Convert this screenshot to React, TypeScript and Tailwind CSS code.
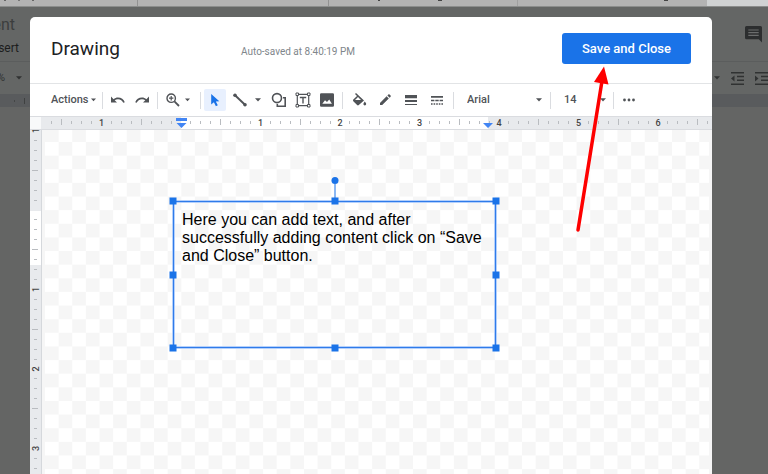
import type { ReactNode } from 'react';

const INCH = 79.5;

/* Small drop-down triangle */
const Caret = ({ className = 'w-1.5' }: { className?: string }) => (
  <svg viewBox="0 0 6 4" className={`h-1 shrink-0 ${className}`} fill="currentColor" aria-hidden="true">
    <path d="M0 0.3h6L3 3.5z" />
  </svg>
);

const Separator = () => <div className="mx-[3px] h-[17px] w-px shrink-0 bg-[#dadce0]" />;

interface ToolProps {
  label: string;
  className?: string;
  children: ReactNode;
}

const Tool = ({ label, className = 'w-6 justify-center', children }: ToolProps) => (
  <button type="button" aria-label={label} className={`flex h-[22px] shrink-0 items-center ${className}`}>
    {children}
  </button>
);

const Icon = ({ children }: { children: ReactNode }) => (
  <svg viewBox="0 0 16 16" className="h-4 w-4 shrink-0" fill="currentColor" aria-hidden="true">
    {children}
  </svg>
);

interface PickerProps {
  label: string;
  options: string[];
  className: string;
  caretClass: string;
}

const Picker = ({ label, options, className, caretClass }: PickerProps) => (
  <div className={`relative flex shrink-0 items-center ${className}`}>
    <select aria-label={label} className="h-[22px] w-full appearance-none bg-transparent pl-[10px] outline-none">
      {options.map((o) => (
        <option key={o}>{o}</option>
      ))}
    </select>
    <Caret className={`pointer-events-none absolute w-1.5 ${caretClass}`} />
  </div>
);

const Toolbar = () => (
  <div className="flex h-8 shrink-0 items-center overflow-hidden pl-[21px] text-[11px] font-medium text-[#505357]">
    <button type="button" className="flex w-12 shrink-0 items-center gap-0.5">
      Actions
      <Caret className="w-[5px]" />
    </button>
    <Separator />
    <Tool label="Undo">
      <Icon>
        <path d="M1 4.6v6h6L4.700 8.300c.9-.7 2-1.100 3.300-1.100 2.400 0 4.500 1.500 5.300 3.600l1.500-.5C13.800 7.500 11.200 5.600 8 5.600c-1.700 0-3.200.6-4.400 1.600z" />
      </Icon>
    </Tool>
    <Tool label="Redo">
      <Icon>
        <path d="M15 4.600v6H9l2.300-2.300C10.400 7.600 9.300 7.200 8 7.200c-2.400 0-4.500 1.500-5.300 3.600l-1.500-.5C2.200 7.500 4.800 5.600 8 5.600c1.700 0 3.200.6 4.400 1.600z" />
      </Icon>
    </Tool>
    <Separator />
    <Tool label="Zoom" className="w-9 gap-1 pl-1">
      <Icon>
        <g fill="none" stroke="currentColor" strokeWidth="1.4">
          <circle cx="6.2" cy="6.2" r="4.2" />
          <path d="M9.4 9.4l4.6 4.6" strokeWidth="1.8" />
          <path d="M4 6.200h4.400M6.200 4v4.400" strokeWidth="1.2" />
        </g>
      </Icon>
      <Caret className="w-[5px]" />
    </Tool>
    <Separator />
    <Tool label="Select" className="w-[22px] justify-center rounded-[2px] bg-[#e8f0fe] text-[#1a73e8]">
      <Icon>
        <path d="M4.200 2v10.600l2.700-2.300 2 4 1.900-1-2-3.800 3.500-.2z" />
      </Icon>
    </Tool>
    <Tool label="Line" className="w-[41px] gap-[7px] pl-1.5">
      <Icon>
        <path d="M3 3.200l10 9.600" stroke="currentColor" strokeWidth="1.9" />
        <circle cx="3" cy="3.200" r="1.8" />
        <circle cx="13" cy="12.800" r="1.8" />
      </Icon>
      <Caret />
    </Tool>
    <Tool label="Shape">
      <Icon>
        <g fill="none" stroke="currentColor" strokeWidth="1.6">
          <circle cx="6" cy="6.100" r="4.500" />
          <path d="M12 5.800h2.200v8.400H6.300V12" />
        </g>
      </Icon>
    </Tool>
    <Tool label="Text box">
      <Icon>
        <path d="M2.300 2.300h11.400v11.400H2.300z" fill="none" stroke="currentColor" strokeWidth="1.2" />
        <path d="M4.800 4.800h6.400v1.500H8.700v5.200H7.300V6.300H4.800z" />
        <g fill="#fff" stroke="currentColor" strokeWidth="1">
          <path d="M1 1h2.500v2.500H1zM12.500 1H15v2.500h-2.500zM1 12.500h2.500V15H1zM12.500 12.500H15V15h-2.500z" />
        </g>
      </Icon>
    </Tool>
    <Tool label="Image">
      <Icon>
        <path
          d="M2.300 1.200h11.400a1.300 1.300 0 0 1 1.300 1.300v11a1.300 1.300 0 0 1-1.300 1.300H2.300A1.300 1.300 0 0 1 1 13.500v-11a1.300 1.300 0 0 1 1.300-1.300zM3.300 11.800h9.600L10.200 7.500 8 10 6 8.200z"
          fillRule="evenodd"
        />
      </Icon>
    </Tool>
    <Separator />
    <Tool label="Fill color" className="w-[26px] justify-center">
      <Icon>
        <path d="M5 1l8 7.500-5.200 4.600c-.5.500-1.200.5-1.700 0L2.300 9.200c-.5-.5-.5-1.100 0-1.600L6 4 4 2zM7 5L4 8h6z" fillRule="evenodd" />
        <path d="M13.800 9.500s1.400 1.600 1.400 2.500a1.400 1.400 0 0 1-2.800 0c0-.9 1.400-2.500 1.400-2.500z" />
      </Icon>
    </Tool>
    <Tool label="Line color" className="w-[26px] justify-center">
      <Icon>
        <path d="M3 10.900l6.600-6.600 2.200 2.200L5.200 13.100H3zM10.400 3.500l1-1c.3-.3.800-.3 1.100 0l1.100 1.100c.3.300.3.800 0 1.100l-1 1z" />
      </Icon>
    </Tool>
    <Tool label="Line weight" className="w-[26px] justify-center">
      <Icon>
        <path d="M2 3h12v3.200H2zM2 8h12v2H2zM2 12h12v1.100H2z" />
      </Icon>
    </Tool>
    <Tool label="Line dash" className="w-[26px] justify-center">
      <Icon>
        <path d="M2 4h12v1.700H2zM2 7.700h3.400v1.500H2zM6.300 7.700h3.400v1.500H6.300zM10.600 7.700H14v1.500h-3.400zM2 11.200h1.600v1.500H2zM4.600 11.200h1.600v1.500H4.600zM7.200 11.200h1.600v1.500H7.200zM9.800 11.200h1.600v1.500H9.800zM12.400 11.200H14v1.500h-1.600z" />
      </Icon>
    </Tool>
    <Separator />
    <Picker label="Font" options={['Arial']} className="w-[90px]" caretClass="right-[5px]" />
    <Separator />
    <Picker label="Font size" options={['14']} className="w-14" caretClass="right-1" />
    <Separator />
    <Tool label="More">
      <Icon>
        <circle cx="3.500" cy="8" r="1.400" />
        <circle cx="8" cy="8" r="1.400" />
        <circle cx="12.500" cy="8" r="1.400" />
      </Icon>
    </Tool>
  </div>
);

/* Ticks sit at every eighth of an inch, with a longer one at the half */
const eighths = (from: number, length: number) =>
  Array.from({ length: Math.max(0, Math.floor((length * 8) / INCH)) - from }, (_, i) => i + from);

const HorizontalRuler = () => (
  <svg className="h-3 min-w-0 flex-1 bg-[#e8eaed]" aria-hidden="true">
    <rect x="140" y="0" width="307" height="12" fill="#fff" />
    {eighths(-13, window.innerWidth - 230).map((i) => {
      const x = 140 + (i * INCH) / 8;
      if (i === 0) return null;
      if (i % 8 === 0) {
        return (
          <text key={i} x={x} y="9" textAnchor="middle" fontSize="9" fontWeight="500" fill="#444">
            {Math.abs(i / 8)}
          </text>
        );
      }
      const half = i % 4 === 0;
      return <rect key={i} x={Math.round(x - 0.5)} y={half ? 2 : 4} width="1" height={half ? 6 : 3} fill="#b9bcc0" />;
    })}
    <path d="M135 1h11v3h-11zM135.500 6h10l-5 5zM442 6h10l-5 5z" fill="#4285f4" />
  </svg>
);

const VerticalRuler = () => (
  <svg className="h-full w-[11px] shrink-0 bg-[#e8eaed]" aria-hidden="true">
    <rect x="0" y="81" width="11" height="54" fill="#fff" />
    {eighths(-8, window.innerHeight - 200).map((i) => {
      const y = 80 + (i * INCH) / 8;
      if (i === 0) return null;
      if (i % 8 === 0) {
        return (
          <text
            key={i}
            transform={`translate(9 ${y}) rotate(-90)`}
            textAnchor="middle"
            fontSize="9"
            fontWeight="500"
            fill="#444"
          >
            {Math.abs(i / 8)}
          </text>
        );
      }
      const half = i % 4 === 0;
      return <rect key={i} x={half ? 2 : 4} y={Math.round(y - 0.5)} width={half ? 6 : 3} height="1" fill="#b9bcc0" />;
    })}
  </svg>
);

const Checkerboard = () => (
  <svg className="absolute inset-0 h-full w-full" aria-hidden="true">
    <defs>
      <pattern id="checker" x="3" y="12" width="27.26" height="27.26" patternUnits="userSpaceOnUse">
        <path d="M0 0h13.63v13.63H0zM13.63 13.63h13.63v13.63H13.63z" fill="#fff" />
      </pattern>
    </defs>
    <rect width="100%" height="100%" fill="#f6f6f6" />
    <rect x="3" width="664" height="100%" fill="url(#checker)" />
  </svg>
);

const HANDLES = [
  'left-0 top-0',
  'left-1/2 top-0',
  'left-full top-0',
  'left-0 top-1/2',
  'left-full top-1/2',
  'left-0 top-full',
  'left-1/2 top-full',
  'left-full top-full',
];

const TextBox = () => (
  <div className="absolute left-[131px] top-[71px] h-[147px] w-[323px]">
    <div className="absolute inset-0 border border-[#2f7bea] shadow-[0_0_0_1px_#b4d0fb,inset_0_0_0_1px_#b4d0fb]" />
    {/* Rotation handle */}
    <div className="absolute bottom-full left-1/2 flex -translate-x-1/2 flex-col items-center">
      <div className="h-[7px] w-[7px] rounded-full bg-[#1a73e8]" />
      <div className="h-[17px] w-px bg-[#1a73e8]" />
    </div>
    <p className="relative pl-[9px] pr-2 pt-[10px] font-['Liberation_Sans',Arial,sans-serif] text-[16px] leading-[18px] text-black">
      Here you can add text, and after successfully adding content click on “Save and Close” button.
    </p>
    {HANDLES.map((pos) => (
      <div key={pos} className={`absolute h-[7px] w-[7px] -translate-x-1/2 -translate-y-1/2 bg-[#1a73e8] ${pos}`} />
    ))}
  </div>
);

const DrawingDialog = () => (
  <div
    role="dialog"
    aria-labelledby="drawing-title"
    className="absolute bottom-0 left-[30px] right-14 top-[17px] flex flex-col overflow-hidden rounded-t-[5px] bg-white"
  >
    <header className="flex h-[67px] shrink-0 items-center border-b border-[#e2e4e6] px-[21px] pb-[3px]">
      <h1 id="drawing-title" className="w-[190px] text-[19px] leading-6 text-[#202124]">
        Drawing
      </h1>
      <span className="pt-1.5 text-[10px] leading-4 text-[#80868b]">Auto-saved at 8:40:19 PM</span>
      <button
        type="button"
        className="ml-auto h-[31px] w-[129px] rounded-[3px] bg-[#1a73e8] text-[13px] font-medium text-white"
      >
        Save and Close
      </button>
    </header>
    <Toolbar />
    <div className="flex shrink-0 border-y border-[#dadce0]">
      <div className="h-3 w-[11px] bg-[#f8f9fa]" />
      <HorizontalRuler />
    </div>
    <div className="flex min-h-0 flex-1">
      <VerticalRuler />
      <div className="relative flex-1 overflow-hidden border-l border-[#d5d8dc]">
        <Checkerboard />
        <TextBox />
      </div>
    </div>
  </div>
);

/* Dimmed editor that shows around the dialog */
const Backdrop = () => (
  <div className="flex flex-1 flex-col text-[#303232]">
    <div className="flex h-[7px] border-b border-[#8b8d8c] bg-[#b3b3b3]">
      <div className="flex w-[137px] gap-3 pl-1">
        <div className="h-px w-0.5 bg-[#666]" />
        <div className="h-px w-0.5 bg-[#777]" />
        <div className="h-px w-0.5 bg-[#666]" />
      </div>
      <div className="w-[191px] border-l border-[#929292]" />
      <div className="flex w-[189px] gap-[58px] border-l border-[#929292] pl-[49px]">
        <div className="h-px w-0.5 bg-[#444]" />
        <div className="h-px w-1 bg-[#444]" />
      </div>
      <div className="w-[190px] border-l border-[#a0a0a0] pl-[146px]">
        <div className="h-px w-1 bg-[#444]" />
      </div>
      <div className="flex-1 bg-[#d0d2d3]" />
    </div>
    <div className="flex h-[55px] items-start justify-between border-b border-[#5b5d5d]">
      <div className="flex flex-col pt-2">
        <span className="flex w-[15px] justify-end text-[16px] leading-5 text-[#3c3e3e]">ent</span>
        <span className="flex w-[19px] justify-end pt-1 text-[12px] leading-[18px] text-[#1c1d1d]">sert</span>
      </div>
      <svg viewBox="0 0 17 17" className="mr-1.5 mt-[19px] h-[17px] w-[17px]" aria-hidden="true">
        <path
          d="M1.500 0h14A1.500 1.500 0 0 1 17 1.500V16.500l-3.200-3.200H1.500A1.500 1.500 0 0 1 0 11.800V1.500A1.500 1.500 0 0 1 1.500 0z"
          fill="#2c2e2f"
        />
        <path d="M3.300 4h10.400M3.300 6.700h10.400M3.300 9.400h10.400" stroke="#6b6d6d" strokeWidth="1.2" />
      </svg>
    </div>
    <div className="flex h-8 items-center justify-between">
      <div className="flex items-center gap-[11px]">
        <span className="flex w-[5px] justify-end text-[11px]">%</span>
        <Caret />
      </div>
      <div className="flex items-center gap-[11px]">
        <Caret />
        <svg viewBox="0 0 13 13" className="h-[13px] w-[13px]" fill="currentColor" aria-hidden="true">
          <path d="M0 0h13v1.500H0zM6 3.800h7v1.500H6zM6 7.600h7v1.500H6zM0 11.400h13v1.500H0zM0 6.500l3.500-3v6z" />
        </svg>
        <svg viewBox="0 0 13 13" className="h-[13px] w-[13px]" fill="currentColor" aria-hidden="true">
          <path d="M0 0h13v1.500H0zM6 3.800h7v1.500H6zM6 7.600h7v1.500H6zM0 11.400h13v1.500H0zM3.500 6.500L0 3.500v6z" />
        </svg>
      </div>
    </div>
    <div className="flex h-[13px] items-center bg-[#595b5d]">
      <div className="ml-3.5 mr-[9px] h-0.5 w-px bg-[#444646]" />
      <div className="h-1.5 w-px bg-[#3f4141]" />
    </div>
    <div className="flex-1 bg-[#646564]" />
  </div>
);

/* Red pointer from the drawing up to the save button */
const Arrow = () => (
  <svg
    viewBox="0 0 38 170"
    className="pointer-events-none absolute right-[156px] top-[65px] h-[170px] w-[38px]"
    fill="#fe0000"
    aria-hidden="true"
  >
    <path d="M4 165L28 16" stroke="#fe0000" strokeWidth="3.5" strokeLinecap="round" />
    <path d="M30 1.500L34.500 19.500L20 17z" />
  </svg>
);

export default function App() {
  return (
    <div className="relative flex min-h-screen flex-col overflow-hidden bg-[#646665] font-[Roboto,sans-serif]">
      <Backdrop />
      <DrawingDialog />
      <Arrow />
    </div>
  );
}
